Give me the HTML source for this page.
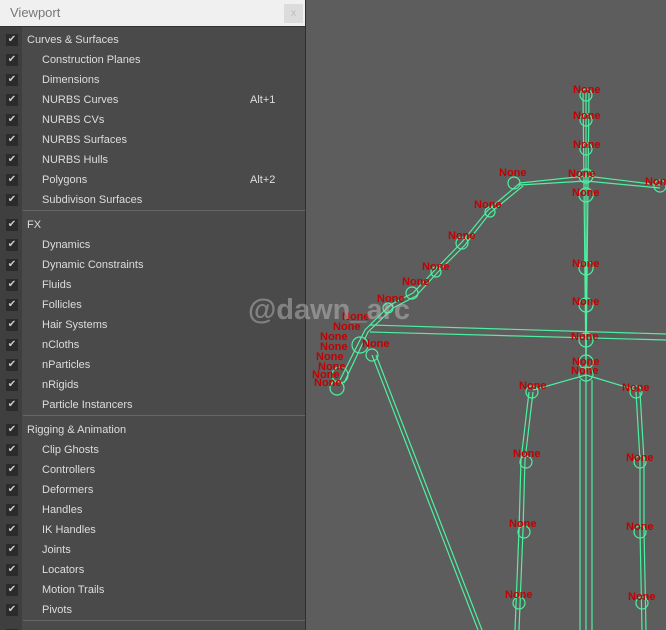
<!DOCTYPE html>
<html style="overflow:hidden;height:630px"><head><style>
body{margin:0;width:666px;height:630px;overflow:hidden;background:#5d5d5d;font-family:"Liberation Sans",sans-serif;position:relative}
#panel{position:absolute;left:0;top:0;width:305px;height:630px;background:#4a4a4a;border-right:1px solid #2e2e2e;overflow:hidden}
#title{height:26px;background:#f0f0f0;border-bottom:1px solid #333;position:relative}
#title span{position:absolute;left:10px;top:5px;font-size:13px;color:#777}
#close{position:absolute;right:2px;top:4px;width:19px;height:19px;background:#dcdcdc;color:#bbb;font-size:10px;text-align:center;line-height:19px}
#strip{position:absolute;left:0;top:27px;width:22px;height:603px;background:#3f3f3f}
.r{position:absolute;left:0;height:20px;width:305px;font-size:11px;color:#ddd;margin-top:2px}
.r .c{position:absolute;left:6px;top:3px;width:12px;height:12px;background:#2b2b2b;color:#ccc;font-size:10px;line-height:12px;text-align:center}
.r .t{position:absolute;top:3px}
.r .k{position:absolute;left:250px;top:3px}
.sep{position:absolute;left:23px;width:282px;height:1px;background:#666}
#wm{position:absolute;left:248px;top:294px;font-size:29px;font-weight:bold;color:rgba(200,200,200,0.45);z-index:5}
</style></head><body>
<svg width="666" height="630" style="position:absolute;left:0;top:0" fill="none" stroke="#4df0a0" stroke-width="1.2">
<g>
<path d="M586 92V630M583 92L586 372M589 92L586 372"/>
<path d="M520 183L586 176L660 185M520 185L586 181L660 188"/>
<path d="M520 183L488 210L462 242L435 270L413 293L390 305L365 330L340 380M523 186L490 213L465 245L438 272L416 296L393 308L368 332L344 383"/>
<path d="M370 325L666 334M370 332L666 340M372 355L478 630M376 355L482 630"/>
<path d="M586 375L533 390M586 375L636 390M533 392L525 460L523 530L519 630M529 392L521 460L519 530L515 630M636 392L640 460L640 530L642 630M640 392L644 460L644 530L646 630"/>
<path d="M580 380V630M592 380V630"/>
</g>
<g>
<circle cx="586" cy="95" r="6"/><circle cx="586" cy="120" r="6"/><circle cx="586" cy="149" r="6"/><circle cx="586" cy="176" r="7"/><circle cx="586" cy="195" r="7"/><circle cx="586" cy="268" r="7"/><circle cx="586" cy="305" r="7"/><circle cx="586" cy="340" r="7"/><circle cx="586" cy="362" r="7"/><circle cx="586" cy="374" r="7"/>
<circle cx="514" cy="183" r="6"/><circle cx="490" cy="212" r="5"/><circle cx="462" cy="243" r="6"/><circle cx="436" cy="272" r="5"/><circle cx="412" cy="293" r="6"/><circle cx="388" cy="308" r="5"/><circle cx="372" cy="355" r="6"/><circle cx="337" cy="388" r="7"/><circle cx="340" cy="375" r="8"/><circle cx="360" cy="345" r="8"/><circle cx="660" cy="186" r="6"/>
<circle cx="532" cy="392" r="6"/><circle cx="636" cy="392" r="6"/><circle cx="526" cy="462" r="6"/><circle cx="640" cy="462" r="6"/><circle cx="524" cy="532" r="6"/><circle cx="640" cy="532" r="6"/><circle cx="519" cy="603" r="6"/><circle cx="642" cy="603" r="6"/>
</g>
<g fill="#c40000" stroke="none" font-family="Liberation Sans" font-size="11" font-weight="bold">
<text x="573" y="93">None</text><text x="573" y="119">None</text><text x="573" y="148">None</text><text x="568" y="177">None</text><text x="572" y="196">None</text><text x="572" y="267">None</text><text x="572" y="305">None</text><text x="571" y="340">None</text><text x="572" y="365">None</text><text x="571" y="374">None</text>
<text x="499" y="176">None</text><text x="474" y="208">None</text><text x="448" y="239">None</text><text x="422" y="270">None</text><text x="402" y="285">None</text><text x="377" y="302">None</text><text x="645" y="185">Non</text>
<text x="342" y="320">None</text><text x="333" y="330">None</text><text x="320" y="340">None</text><text x="362" y="347">None</text><text x="320" y="350">None</text><text x="316" y="360">None</text><text x="318" y="370">None</text><text x="312" y="378">None</text><text x="314" y="386">None</text>
<text x="519" y="389">None</text><text x="622" y="391">None</text><text x="513" y="457">None</text><text x="626" y="461">None</text><text x="509" y="527">None</text><text x="626" y="530">None</text><text x="505" y="598">None</text><text x="628" y="600">None</text>
</g>
</svg>
<div id="wm">@dawn_arc</div>
<div id="panel">
<div id="title"><span>Viewport</span><div id="close">x</div></div>
<div id="strip"></div>
<div class="r" style="top:29px"><div class="c">✔</div><span class="t" style="left:27px">Curves &amp; Surfaces</span></div>
<div class="r" style="top:49px"><div class="c">✔</div><span class="t" style="left:42px">Construction Planes</span></div>
<div class="r" style="top:69px"><div class="c">✔</div><span class="t" style="left:42px">Dimensions</span></div>
<div class="r" style="top:89px"><div class="c">✔</div><span class="t" style="left:42px">NURBS Curves</span><span class="k">Alt+1</span></div>
<div class="r" style="top:109px"><div class="c">✔</div><span class="t" style="left:42px">NURBS CVs</span></div>
<div class="r" style="top:129px"><div class="c">✔</div><span class="t" style="left:42px">NURBS Surfaces</span></div>
<div class="r" style="top:149px"><div class="c">✔</div><span class="t" style="left:42px">NURBS Hulls</span></div>
<div class="r" style="top:169px"><div class="c">✔</div><span class="t" style="left:42px">Polygons</span><span class="k">Alt+2</span></div>
<div class="r" style="top:189px"><div class="c">✔</div><span class="t" style="left:42px">Subdivison Surfaces</span></div>
<div class="sep" style="top:210px"></div>
<div class="r" style="top:214px"><div class="c">✔</div><span class="t" style="left:27px">FX</span></div>
<div class="r" style="top:234px"><div class="c">✔</div><span class="t" style="left:42px">Dynamics</span></div>
<div class="r" style="top:254px"><div class="c">✔</div><span class="t" style="left:42px">Dynamic Constraints</span></div>
<div class="r" style="top:274px"><div class="c">✔</div><span class="t" style="left:42px">Fluids</span></div>
<div class="r" style="top:294px"><div class="c">✔</div><span class="t" style="left:42px">Follicles</span></div>
<div class="r" style="top:314px"><div class="c">✔</div><span class="t" style="left:42px">Hair Systems</span></div>
<div class="r" style="top:334px"><div class="c">✔</div><span class="t" style="left:42px">nCloths</span></div>
<div class="r" style="top:354px"><div class="c">✔</div><span class="t" style="left:42px">nParticles</span></div>
<div class="r" style="top:374px"><div class="c">✔</div><span class="t" style="left:42px">nRigids</span></div>
<div class="r" style="top:394px"><div class="c">✔</div><span class="t" style="left:42px">Particle Instancers</span></div>
<div class="sep" style="top:415px"></div>
<div class="r" style="top:419px"><div class="c">✔</div><span class="t" style="left:27px">Rigging &amp; Animation</span></div>
<div class="r" style="top:439px"><div class="c">✔</div><span class="t" style="left:42px">Clip Ghosts</span></div>
<div class="r" style="top:459px"><div class="c">✔</div><span class="t" style="left:42px">Controllers</span></div>
<div class="r" style="top:479px"><div class="c">✔</div><span class="t" style="left:42px">Deformers</span></div>
<div class="r" style="top:499px"><div class="c">✔</div><span class="t" style="left:42px">Handles</span></div>
<div class="r" style="top:519px"><div class="c">✔</div><span class="t" style="left:42px">IK Handles</span></div>
<div class="r" style="top:539px"><div class="c">✔</div><span class="t" style="left:42px">Joints</span></div>
<div class="r" style="top:559px"><div class="c">✔</div><span class="t" style="left:42px">Locators</span></div>
<div class="r" style="top:579px"><div class="c">✔</div><span class="t" style="left:42px">Motion Trails</span></div>
<div class="r" style="top:599px"><div class="c">✔</div><span class="t" style="left:42px">Pivots</span></div>
<div class="sep" style="top:620px"></div>
<div class="r" style="top:624px;height:4px;overflow:hidden"><div class="c">✔</div></div>
</div>
</body></html>
